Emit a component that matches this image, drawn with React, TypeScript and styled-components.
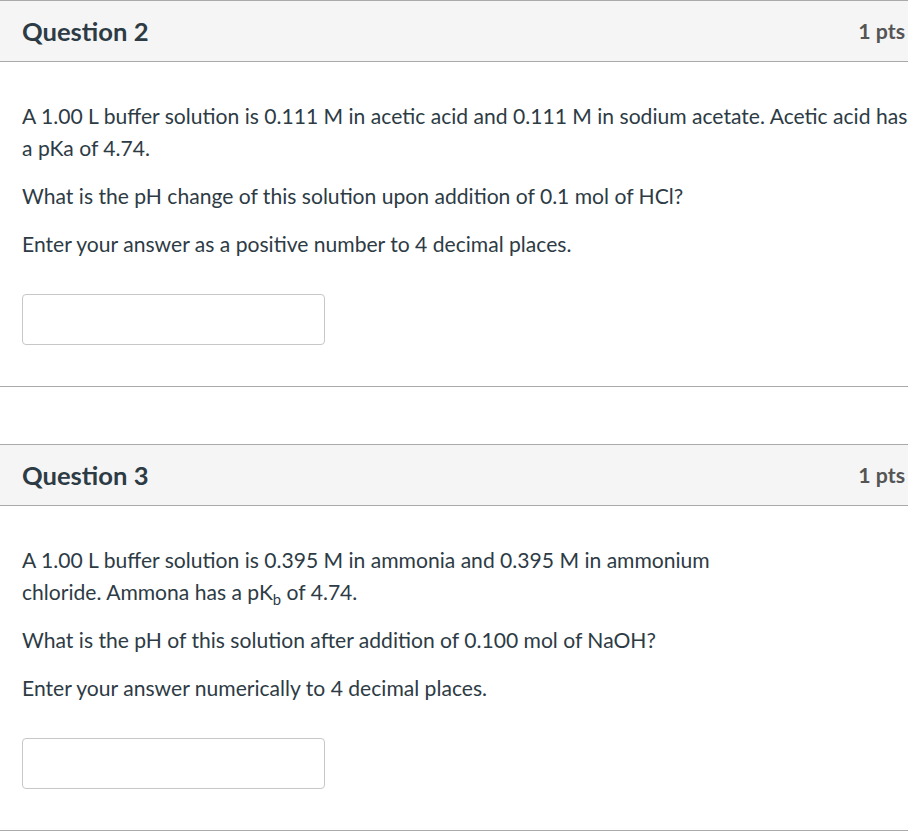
import styled, { createGlobalStyle } from "styled-components";

const GlobalStyle = createGlobalStyle`
  html, body {
    margin: 0;
    padding: 0;
    background: #ffffff;
    overflow: hidden;
  }
  body {
    font-family: Lato, "Open Sans", "Liberation Sans", sans-serif;
    color: #2d3b45;
  }
`;

const Page = styled.div`
  width: 908px;
  overflow: hidden;
  display: flex;
  flex-direction: column;
  gap: 57px;
`;

const Card = styled.div`
  width: 960px;
  flex-shrink: 0;
  border-top: 1px solid #aaaaaa;
  border-bottom: 1px solid #aaaaaa;
  background: #fff;
`;

const Header = styled.div`
  height: 60px;
  background: #f5f5f5;
  border-bottom: 1px solid #aaaaaa;
  display: flex;
  align-items: center;
  justify-content: space-between;
  padding: 0 55px 0 22px;
`;

const Title = styled.h2`
  margin: 0;
  font-size: 25.6px;
  font-weight: 700;
  color: #2d3b45;
`;

const Points = styled.span`
  font-size: 21.3px;
  font-weight: 700;
  color: #555555;
`;

const Body = styled.div`
  padding: 38px 22px 41px 22px;
`;

const Text = styled.p`
  margin: 0 0 16px 0;
  font-size: 21.1px;
  line-height: 32px;
`;

const Sub = styled.sub`
  font-size: 0.7em;
  line-height: 0;
`;

const AnswerBox = styled.input`
  display: block;
  box-sizing: border-box;
  margin-top: 34px;
  width: 303px;
  height: 51px;
  border: 1px solid #c7c7c7;
  border-radius: 4px;
  background: #fff;
  font: inherit;
  padding: 0 10px;
`;

type Q = { title: string; paras: React.ReactNode[] };

const questions: Q[] = [
  {
    title: "Question 2",
    paras: [
      <>
        A 1.00 L buffer solution is 0.111 M in acetic acid and 0.111 M in sodium acetate. Acetic acid has
        <br />
        a pKa of 4.74.
      </>,
      <>What is the pH change of this solution upon addition of 0.1 mol of HCl?</>,
      <>Enter your answer as a positive number to 4 decimal places.</>,
    ],
  },
  {
    title: "Question 3",
    paras: [
      <>
        A 1.00 L buffer solution is 0.395 M in ammonia and 0.395 M in ammonium
        <br />
        chloride. Ammona has a pK<Sub>b</Sub> of 4.74.
      </>,
      <>What is the pH of this solution after addition of 0.100 mol of NaOH?</>,
      <>Enter your answer numerically to 4 decimal places.</>,
    ],
  },
];

export default function App() {
  return (
    <>
      <GlobalStyle />
      <Page>
        {questions.map((q) => (
          <Card key={q.title}>
            <Header>
              <Title>{q.title}</Title>
              <Points>1 pts</Points>
            </Header>
            <Body>
              {q.paras.map((p, i) => (
                <Text key={i}>{p}</Text>
              ))}
              <AnswerBox type="text" aria-label={q.title + " answer"} />
            </Body>
          </Card>
        ))}
      </Page>
    </>
  );
}
